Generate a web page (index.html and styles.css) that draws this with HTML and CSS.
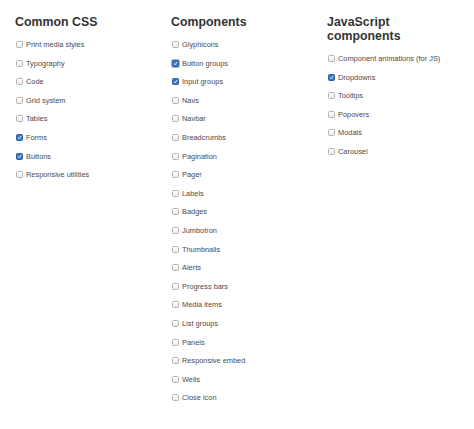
FILE: index.html
```html
<!DOCTYPE html>
<html>
<head>
<title>Customize components</title>
<link rel="stylesheet" href="styles.css">
</head>
<body>
<div class="row">
    <div class="col">
        <h3>Common CSS</h3>
        <label class="checkbox"><input type="checkbox"> Print media styles</label>
        <label class="checkbox"><input type="checkbox"> Typography</label>
        <label class="checkbox"><input type="checkbox"> Code</label>
        <label class="checkbox"><input type="checkbox"> Grid system</label>
        <label class="checkbox"><input type="checkbox"> Tables</label>
        <label class="checkbox"><input type="checkbox" checked> Forms</label>
        <label class="checkbox"><input type="checkbox" checked> Buttons</label>
        <label class="checkbox"><input type="checkbox"> Responsive utilities</label>
    </div>
    <div class="col">
        <h3>Components</h3>
        <label class="checkbox"><input type="checkbox"> Glyphicons</label>
        <label class="checkbox"><input type="checkbox" class="focus" checked> Button groups</label>
        <label class="checkbox"><input type="checkbox" checked> Input groups</label>
        <label class="checkbox"><input type="checkbox"> Navs</label>
        <label class="checkbox"><input type="checkbox"> Navbar</label>
        <label class="checkbox"><input type="checkbox"> Breadcrumbs</label>
        <label class="checkbox"><input type="checkbox"> Pagination</label>
        <label class="checkbox"><input type="checkbox"> Pager</label>
        <label class="checkbox"><input type="checkbox"> Labels</label>
        <label class="checkbox"><input type="checkbox"> Badges</label>
        <label class="checkbox"><input type="checkbox"> Jumbotron</label>
        <label class="checkbox"><input type="checkbox"> Thumbnails</label>
        <label class="checkbox"><input type="checkbox"> Alerts</label>
        <label class="checkbox"><input type="checkbox"> Progress bars</label>
        <label class="checkbox"><input type="checkbox"> Media items</label>
        <label class="checkbox"><input type="checkbox"> List groups</label>
        <label class="checkbox"><input type="checkbox"> Panels</label>
        <label class="checkbox"><input type="checkbox"> Responsive embed</label>
        <label class="checkbox"><input type="checkbox"> Wells</label>
        <label class="checkbox"><input type="checkbox"> Close icon</label>
    </div>
    <div class="col">
        <h3>JavaScript components</h3>
        <label class="checkbox"><input type="checkbox"> Component animations (for JS)</label>
        <label class="checkbox"><input type="checkbox" checked> Dropdowns</label>
        <label class="checkbox"><input type="checkbox"> Tooltips</label>
        <label class="checkbox"><input type="checkbox"> Popovers</label>
        <label class="checkbox"><input type="checkbox"> Modals</label>
        <label class="checkbox"><input type="checkbox"> Carousel</label>
    </div>
</div>
</body>
</html>
```

FILE: styles.css
```css
body {
    margin: 0;
    font-family: "Liberation Sans", Arial, sans-serif;
    color: #333;
    background: #fff;
}

.row {
    display: grid;
    grid-template-columns: repeat(3, 156px);
    padding: 0 0 0 15px;
}

.col {
    padding-right: 22px;
}

h3 {
    font-size: 12.3px;
    font-weight: bold;
    line-height: 14px;
    margin: 14.5px 0 6.8px 0;
    letter-spacing: 0.05px;
}

.checkbox {
    display: flex;
    align-items: center;
    height: 18.6px;
    font-size: 7.4px;
    color: #4a4a4a;
    white-space: nowrap;
}

.checkbox input {
    appearance: none;
    -webkit-appearance: none;
    width: 7px;
    height: 7px;
    margin: 0 3px 0 1px;
    border: 1px solid #b4b4b4;
    border-radius: 1.5px;
    background: linear-gradient(#fff, #ececec);
    box-sizing: border-box;
    flex-shrink: 0;
}

.checkbox input:checked {
    border-color: #2e5f9e;
    background: #3b78c8 url("data:image/svg+xml,%3Csvg xmlns='http://www.w3.org/2000/svg' viewBox='0 0 10 10'%3E%3Cpath d='M2 5.2 4.2 7.5 8.3 2' fill='none' stroke='%23fff' stroke-width='1.8'/%3E%3C/svg%3E") center / 100% no-repeat;
}

.checkbox input.focus {
    box-shadow: 0 0 0 1px #9bbbe6;
}
```
